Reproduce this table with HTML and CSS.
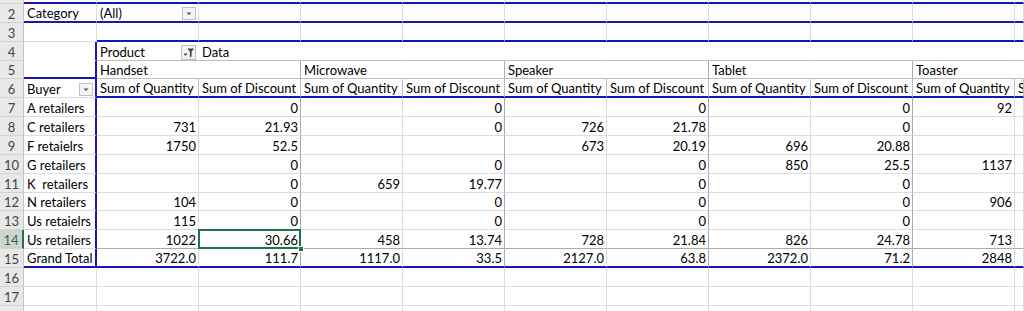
FILE: index.html
```html
<!DOCTYPE html>
<html>
<head>
<meta charset="utf-8">
<link rel="stylesheet" href="styles.css">
</head>
<body>
<div class="sheet">
  <!-- row 1 (sliver) -->
  <div class="rh"></div>
  <div class="c bB"></div><div class="c bB"></div><div class="c bB"></div><div class="c bB"></div><div class="c bB"></div><div class="c bB"></div><div class="c bB"></div><div class="c bB"></div><div class="c bB"></div><div class="c bB"></div><div class="c bB"></div>

  <!-- row 2 -->
  <div class="rh">2</div>
  <div class="c bB">Category</div>
  <div class="c bB">(All)<span class="dd"><svg width="12" height="11" viewBox="0 0 12 11"><polygon points="3.5,4.5 8.5,4.5 6,7" fill="#555"/></svg></span></div>
  <div class="c bB"></div><div class="c bB"></div><div class="c bB"></div><div class="c bB"></div><div class="c bB"></div><div class="c bB"></div><div class="c bB"></div><div class="c bB"></div><div class="c bB"></div>

  <!-- row 3 -->
  <div class="rh">3</div>
  <div class="c"></div>
  <div class="c bB"></div><div class="c bB"></div><div class="c bB"></div><div class="c bB"></div><div class="c bB"></div><div class="c bB"></div><div class="c bB"></div><div class="c bB"></div><div class="c bB"></div><div class="c bB"></div>

  <!-- row 4 -->
  <div class="rh">4</div>
  <div class="c bR nB"></div>
  <div class="c nR pB">Product<span class="dd fb"><svg width="13" height="13" viewBox="0 0 13 13"><polygon points="1.5,7.5 5.5,7.5 3.5,10" fill="#444"/><polygon points="5.5,2.5 12,2.5 9.6,5.8 9.6,10.5 7.9,11.5 7.9,5.8" fill="#444"/></svg></span></div>
  <div class="c nR pB">Data</div>
  <div class="c nR pB"></div><div class="c nR pB"></div><div class="c nR pB"></div><div class="c nR pB"></div><div class="c nR pB"></div><div class="c nR pB"></div><div class="c nR pB"></div><div class="c nR pB"></div>

  <!-- row 5 -->
  <div class="rh">5</div>
  <div class="c bR bB"></div>
  <div class="c nR pB">Handset</div><div class="c gR pB"></div>
  <div class="c nR pB">Microwave</div><div class="c gR pB"></div>
  <div class="c nR pB">Speaker</div><div class="c gR pB"></div>
  <div class="c nR pB">Tablet</div><div class="c gR pB"></div>
  <div class="c nR pB">Toaster</div><div class="c nR pB"></div>

  <!-- row 6 -->
  <div class="rh">6</div>
  <div class="c bR">Buyer<span class="dd"><svg width="12" height="11" viewBox="0 0 12 11"><polygon points="3.5,4.5 8.5,4.5 6,7" fill="#555"/></svg></span></div>
  <div class="c pR bB">Sum of Quantity</div><div class="c pR bB">Sum of Discount</div>
  <div class="c pR bB">Sum of Quantity</div><div class="c pR bB">Sum of Discount</div>
  <div class="c pR bB">Sum of Quantity</div><div class="c pR bB">Sum of Discount</div>
  <div class="c pR bB">Sum of Quantity</div><div class="c pR bB">Sum of Discount</div>
  <div class="c pR bB">Sum of Quantity</div><div class="c pR bB clip">Sum of Discount</div>

  <!-- row 7 -->
  <div class="rh">7</div>
  <div class="c bR">A retailers</div>
  <div class="c n"></div><div class="c n gR">0</div>
  <div class="c n"></div><div class="c n gR">0</div>
  <div class="c n"></div><div class="c n gR">0</div>
  <div class="c n"></div><div class="c n gR">0</div>
  <div class="c n">92</div><div class="c n"></div>

  <!-- row 8 -->
  <div class="rh">8</div>
  <div class="c bR">C retailers</div>
  <div class="c n">731</div><div class="c n gR">21.93</div>
  <div class="c n"></div><div class="c n gR">0</div>
  <div class="c n">726</div><div class="c n gR">21.78</div>
  <div class="c n"></div><div class="c n gR">0</div>
  <div class="c n"></div><div class="c n"></div>

  <!-- row 9 -->
  <div class="rh">9</div>
  <div class="c bR">F retaielrs</div>
  <div class="c n">1750</div><div class="c n gR">52.5</div>
  <div class="c n"></div><div class="c n gR"></div>
  <div class="c n">673</div><div class="c n gR">20.19</div>
  <div class="c n">696</div><div class="c n gR">20.88</div>
  <div class="c n"></div><div class="c n"></div>

  <!-- row 10 -->
  <div class="rh">10</div>
  <div class="c bR">G retailers</div>
  <div class="c n"></div><div class="c n gR">0</div>
  <div class="c n"></div><div class="c n gR">0</div>
  <div class="c n"></div><div class="c n gR">0</div>
  <div class="c n">850</div><div class="c n gR">25.5</div>
  <div class="c n">1137</div><div class="c n"></div>

  <!-- row 11 -->
  <div class="rh">11</div>
  <div class="c bR">K  retailers</div>
  <div class="c n"></div><div class="c n gR">0</div>
  <div class="c n">659</div><div class="c n gR">19.77</div>
  <div class="c n"></div><div class="c n gR">0</div>
  <div class="c n"></div><div class="c n gR">0</div>
  <div class="c n"></div><div class="c n"></div>

  <!-- row 12 -->
  <div class="rh">12</div>
  <div class="c bR">N retailers</div>
  <div class="c n">104</div><div class="c n gR">0</div>
  <div class="c n"></div><div class="c n gR">0</div>
  <div class="c n"></div><div class="c n gR">0</div>
  <div class="c n"></div><div class="c n gR">0</div>
  <div class="c n">906</div><div class="c n"></div>

  <!-- row 13 -->
  <div class="rh">13</div>
  <div class="c bR">Us retaielrs</div>
  <div class="c n">115</div><div class="c n gR">0</div>
  <div class="c n"></div><div class="c n gR">0</div>
  <div class="c n"></div><div class="c n gR">0</div>
  <div class="c n"></div><div class="c n gR">0</div>
  <div class="c n"></div><div class="c n"></div>

  <!-- row 14 -->
  <div class="rh rh-sel">14</div>
  <div class="c bR">Us retailers</div>
  <div class="c n gB">1022</div><div class="c n gR gB sel">30.66</div>
  <div class="c n gB">458</div><div class="c n gR gB">13.74</div>
  <div class="c n gB">728</div><div class="c n gR gB">21.84</div>
  <div class="c n gB">826</div><div class="c n gR gB">24.78</div>
  <div class="c n gB">713</div><div class="c n gB"></div>

  <!-- row 15 -->
  <div class="rh">15</div>
  <div class="c bR bB">Grand Total</div>
  <div class="c n bB">3722.0</div><div class="c n gR bB">111.7</div>
  <div class="c n bB">1117.0</div><div class="c n gR bB">33.5</div>
  <div class="c n bB">2127.0</div><div class="c n gR bB">63.8</div>
  <div class="c n bB">2372.0</div><div class="c n gR bB">71.2</div>
  <div class="c n bB">2848</div><div class="c n bB"></div>

  <!-- row 16 -->
  <div class="rh">16</div>
  <div class="c"></div><div class="c"></div><div class="c"></div><div class="c"></div><div class="c"></div><div class="c"></div><div class="c"></div><div class="c"></div><div class="c"></div><div class="c"></div><div class="c"></div>

  <!-- row 17 -->
  <div class="rh">17</div>
  <div class="c"></div><div class="c"></div><div class="c"></div><div class="c"></div><div class="c"></div><div class="c"></div><div class="c"></div><div class="c"></div><div class="c"></div><div class="c"></div><div class="c"></div>

  <!-- row 18 (only its top edge is visible) -->
  <div class="rh"></div>
  <div class="c"></div><div class="c"></div><div class="c"></div><div class="c"></div><div class="c"></div><div class="c"></div><div class="c"></div><div class="c"></div><div class="c"></div><div class="c"></div><div class="c"></div>
</div>
</body>
</html>
```

FILE: styles.css
```css
:root {
  --grid: #dcdcdc;
  --piv: #bdbdbd;
  --grp: #ababab;
  --blue: #1616b4;
  --green: #217346;
}

html, body {
  margin: 0;
  padding: 0;
  background: #ffffff;
  overflow: hidden;
  height: 311px;
}

body {
  font-family: Lato, "Liberation Sans", sans-serif;
  font-size: 13px;
  color: #000;
}

.sheet {
  display: grid;
  grid-template-columns: 24px 73px repeat(9, 102px) 1fr;
  grid-template-rows: 4px;
  grid-auto-rows: 18.86px;
  width: 1024px;
}

.rh {
  box-sizing: border-box;
  background: #e8e8e8;
  color: #444;
  border-right: 1px solid #c4c4c4;
  border-bottom: 1px solid #d2d2d2;
  display: flex;
  justify-content: center;
  align-items: flex-end;
  line-height: 15px;
  overflow: hidden;
}

.rh-sel {
  background: #d2d2d2;
  color: var(--green);
  border-right: 2px solid var(--green);
}

.c {
  box-sizing: border-box;
  border-right: 1px solid var(--grid);
  border-bottom: 1px solid var(--grid);
  padding: 0 2px 0 3px;
  display: flex;
  align-items: flex-end;
  white-space: pre;
  overflow: hidden;
  line-height: 15px;
  min-width: 0;
}

.clip {
  padding-right: 0;
}

.n { justify-content: flex-end; }

.nR { border-right-color: transparent; }
.nB { border-bottom-color: transparent; }
.pR { border-right-color: var(--piv); }
.pB { border-bottom-color: var(--piv); }
.gR { border-right-color: var(--grp); }
.gB { border-bottom-color: var(--grp); }
.bB { border-bottom: 2px solid var(--blue); }
.bR { border-right: 2px solid var(--blue); }

.dd {
  box-sizing: border-box;
  margin-left: auto;
  width: 14px;
  height: 13px;
  border: 1px solid #c2c2c2;
  background: #f4f4f4;
  display: flex;
  align-items: center;
  justify-content: center;
  margin-bottom: 1px;
}

.dd.fb {
  height: 15px;
  width: 15px;
  margin-bottom: 0;
}

.sel {
  position: relative;
  overflow: visible;
}

.sel::after {
  content: "";
  position: absolute;
  left: -1px;
  top: -1px;
  right: -1px;
  bottom: -1px;
  border: 2px solid var(--green);
  pointer-events: none;
}

.sel::before {
  content: "";
  position: absolute;
  right: -4px;
  bottom: -4px;
  width: 4px;
  height: 4px;
  background: var(--green);
  border: 1px solid #fff;
  z-index: 2;
}
```
